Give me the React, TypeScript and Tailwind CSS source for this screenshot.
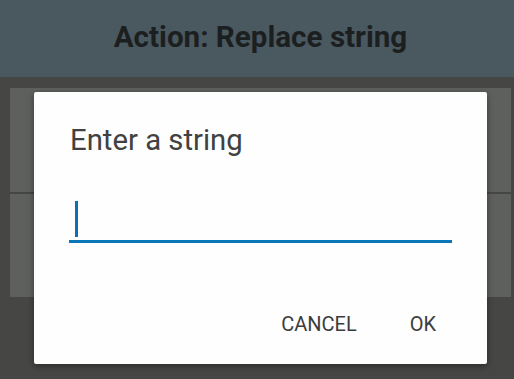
import React from 'react';

export default function App() {
  return (
    <div className="relative h-[379px] w-full overflow-hidden bg-[#464744] font-['Roboto',sans-serif]">
      <div className="flex h-[77px] items-center justify-center bg-[#4a5860] pb-[2px] pl-[7px]">
        <h1 className="text-[29.6px] font-bold text-[#1c1f20]">Action: Replace string</h1>
      </div>

      <div className="flex flex-col gap-[2px] pl-[10px] pr-[3px] pt-[11px]">
        <div className="h-[104px] bg-[#5e605d]" />
        <div className="h-[103px] bg-[#5e605d]" />
      </div>

      <div className="absolute left-[34px] top-[92px] flex h-[272px] w-[453px] flex-col rounded-[2px] bg-[#fdfefd] shadow-[0_2px_6px_rgba(0,0,0,0.4)]">
        <h2 className="pl-[36px] pt-[30px] text-[29.3px] leading-[36px] text-[#404140]">Enter a string</h2>

        <div className="mx-[35px] mt-[41px] flex h-[44px] items-end border-b-[3px] border-[#0a78b8] pb-[3px] pl-[6px]">
          <div className="h-[36px] w-[3px] bg-[#0a72b2]" />
        </div>

        <div className="mt-auto flex justify-end gap-[53px] pb-[28px] pr-[51px] text-[20px] leading-[24px] text-[#3c3d3c]">
          <button>CANCEL</button>
          <button>OK</button>
        </div>
      </div>
    </div>
  );
}
